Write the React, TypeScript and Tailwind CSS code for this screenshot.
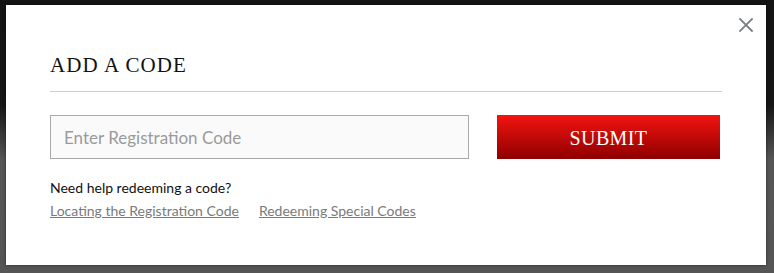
import React from 'react';

const serif = { fontFamily: '"Liberation Serif", "Times New Roman", serif' };
const sans = { fontFamily: 'Lato, "Open Sans", sans-serif' };

function CloseIcon() {
  return (
    <svg width="14" height="14" viewBox="0 0 14 14" fill="none">
      <path d="M1 1L13 13M13 1L1 13" stroke="#7b7f86" strokeWidth="1.8" strokeLinecap="square" />
    </svg>
  );
}

export default function App() {
  return (
    <div className="w-[774px] h-[273px] overflow-hidden bg-[linear-gradient(to_bottom,#141414_0px,#161616_105px,#565656_160px,#555_273px)] pt-[5px] pl-[6px]">
      <div className="relative w-[760px] h-[260px] bg-white shadow-[0_0_3px_rgba(0,0,0,0.5)] px-[44px] pt-[49px]">
        <button className="absolute top-[13px] right-[13px] p-0" aria-label="Close">
          <CloseIcon />
        </button>

        <h2 className="text-[21px] leading-[22px] tracking-[1.1px] text-[#111] pb-[15px] border-b border-[#cccccc]" style={serif}>
          ADD A CODE
        </h2>

        <div className="flex gap-[28px] mt-[23px]">
          <input
            type="text"
            placeholder="Enter Registration Code"
            className="w-[419px] h-[44px] border border-[#a9a9a9] bg-[#fafafa] px-[13px] text-[17px] text-[#333] placeholder:text-[#9a9a9a] outline-none"
            style={sans}
          />
          <button
            className="w-[223px] h-[44px] bg-[linear-gradient(to_bottom,#f31410,#8e0000)] text-white text-[20px] tracking-[0.4px] pt-[1px]"
            style={serif}
          >
            SUBMIT
          </button>
        </div>

        <div className="mt-[17px] text-[14px] leading-[23px]" style={sans}>
          <p className="text-[#111]">Need help redeeming a code?</p>
          <div className="flex gap-[20px]">
            <a href="#" className="text-[#7a7a7a] underline">Locating the Registration Code</a>
            <a href="#" className="text-[#7a7a7a] underline">Redeeming Special Codes</a>
          </div>
        </div>
      </div>
    </div>
  );
}
